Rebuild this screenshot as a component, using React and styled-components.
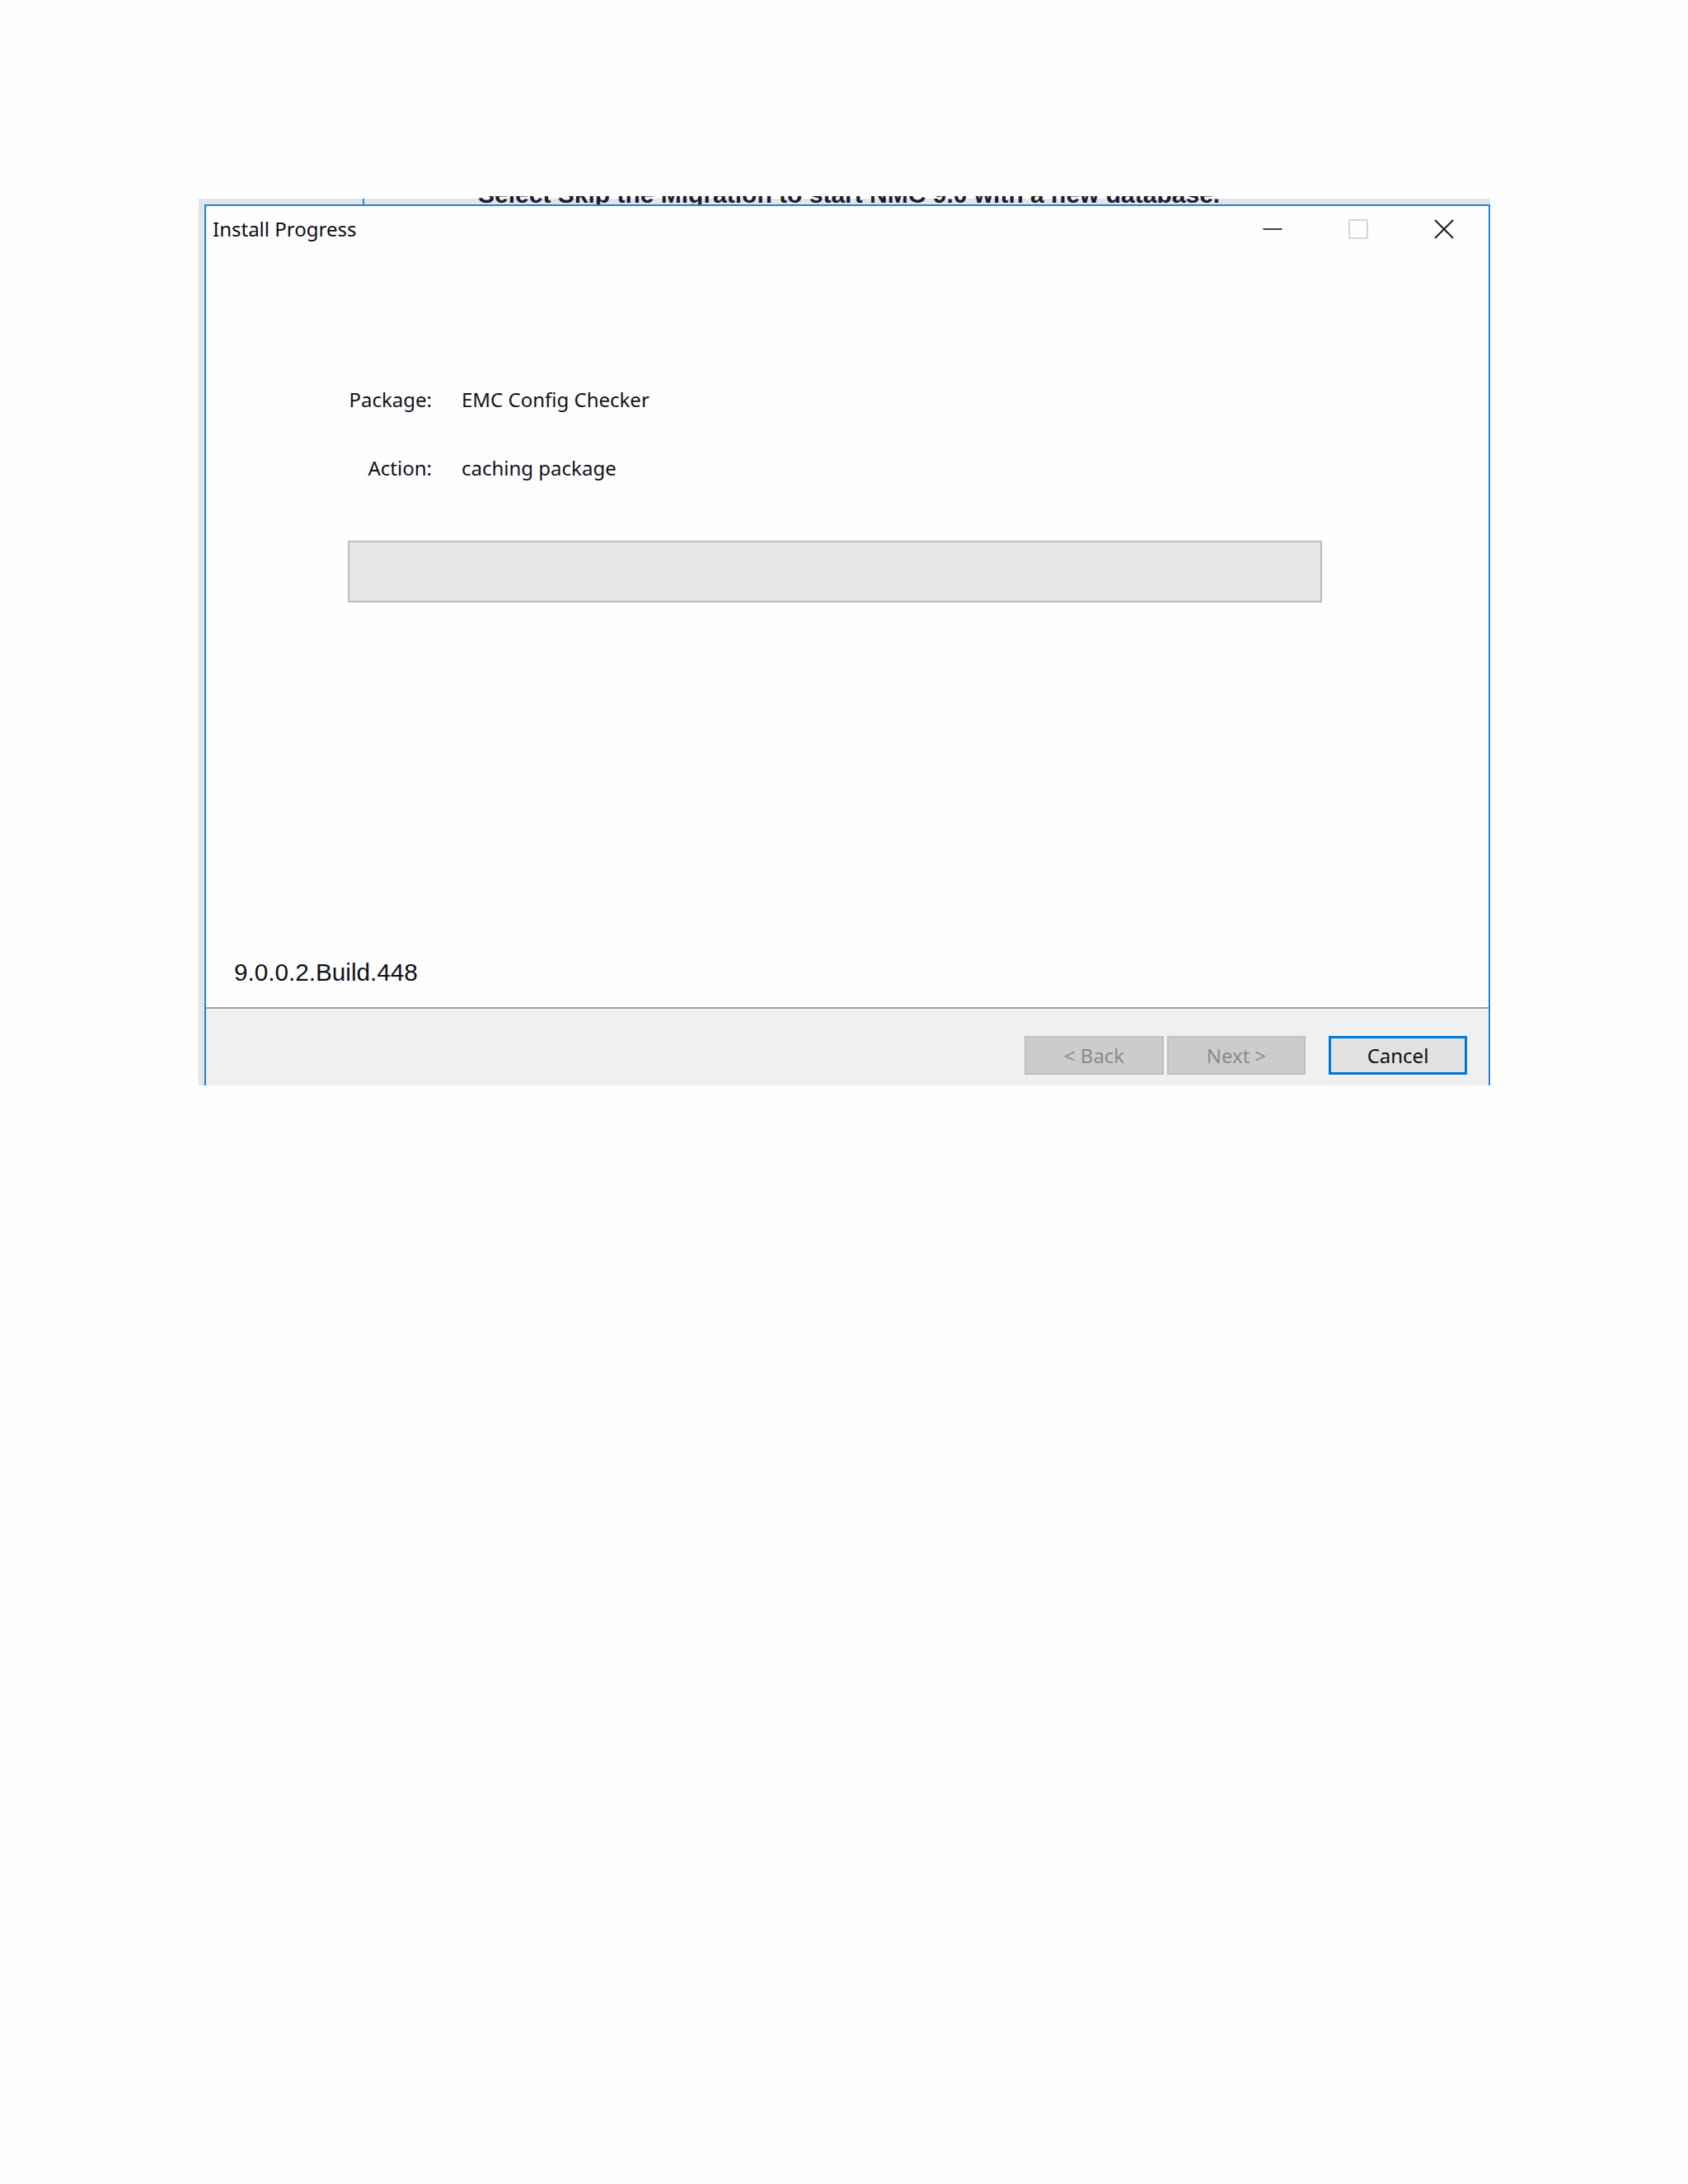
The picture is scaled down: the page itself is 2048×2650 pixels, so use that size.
import React from "react";
import styled, { createGlobalStyle } from "styled-components";

const GlobalStyle = createGlobalStyle`
  html, body {
    margin: 0;
    padding: 0;
    background: #fefefe;
  }
  body {
    font-family: "Noto Sans", "Open Sans", sans-serif;
  }
`;

const Page = styled.div`
  min-height: 2650px;
  box-sizing: border-box;
  padding: 238px 0 0 241px;
  background: #fefefe;
`;

const Stage = styled.div`
  width: 1567px;
  display: flex;
  flex-direction: column;
`;

const BehindStrip = styled.div`
  position: relative;
  height: 10px;
  overflow: hidden;
  background: linear-gradient(to bottom, transparent 3px, #e4e4e4 3px);
`;

const BehindTick = styled.span`
  position: absolute;
  left: 199px;
  top: 3px;
  bottom: 0;
  width: 2px;
  background: #2a86d8;
`;

const BehindText = styled.span`
  position: absolute;
  left: 339px;
  top: -17px;
  font: bold 30px/30px "Liberation Sans", Arial, sans-serif;
  color: #1c1c2a;
  white-space: nowrap;
`;

const WindowRow = styled.div`
  display: flex;
  align-items: stretch;
`;

const BehindEdge = styled.div`
  width: 7px;
  flex: none;
  background: #e4e4e4;
`;

const Window = styled.div`
  width: 1560px;
  box-sizing: border-box;
  border: 2px solid #1e84dc;
  border-bottom: none;
  background: #fefefe;
  display: flex;
  flex-direction: column;
`;

const TitleBar = styled.div`
  height: 56px;
  display: flex;
  align-items: center;
`;

const Title = styled.div`
  flex: 1;
  padding-left: 8px;
  font-size: 24px;
  line-height: 32px;
  color: #0c0c14;
`;

const Controls = styled.div`
  align-self: stretch;
  display: flex;
  padding-right: 2px;
`;

const ControlButton = styled.div`
  width: 104px;
  display: flex;
  align-items: center;
  justify-content: center;
`;

const Body = styled.div`
  display: flex;
  flex-direction: column;
`;

const InfoGrid = styled.div`
  display: grid;
  grid-template-columns: 101px auto;
  column-gap: 36px;
  row-gap: 51px;
  margin: 163px 0 0 173px;
  font-size: 24px;
  line-height: 32px;
  color: #10101a;
`;

const Label = styled.div`
  text-align: right;
  white-space: nowrap;
`;

const Value = styled.div`
  white-space: nowrap;
`;

const ProgressTrack = styled.div`
  margin: 72px 0 0 172px;
  width: 1182px;
  height: 75px;
  box-sizing: border-box;
  border: 2px solid #bcbcbc;
  background: #e6e5e8;
`;

const Version = styled.div`
  margin: 432px 0 25px 34px;
  font: 29.7px/34px "Liberation Sans", Arial, sans-serif;
  color: #10101a;
`;

const Footer = styled.div`
  border-top: 2px solid #a0a0a0;
  background: #f0f0f0;
  display: flex;
  justify-content: flex-end;
  padding: 33px 26px 13px 0;
`;

const Button = styled.div`
  width: ${(p) => p.$width || 168}px;
  height: 47px;
  margin-left: ${(p) => p.$gap || 0}px;
  box-sizing: border-box;
  display: flex;
  align-items: center;
  justify-content: center;
  font-size: 24px;
  line-height: 32px;
  border: ${(p) => (p.$primary ? "3px solid #0078d7" : "2px solid #bfbfbf")};
  background: ${(p) => (p.$primary ? "#e1e1e1" : "#cccccc")};
  color: ${(p) => (p.$primary ? "#0c0c14" : "#8a8a8e")};
`;

const MinimizeIcon = () => (
  <svg width="24" height="24" viewBox="0 0 24 24">
    <line x1="0.5" y1="12" x2="23.5" y2="12" stroke="#111" strokeWidth="1.6" />
  </svg>
);

const MaximizeIcon = () => (
  <svg width="24" height="24" viewBox="0 0 24 24">
    <rect x="1" y="1" width="22" height="22" fill="none" stroke="#c9c9c9" strokeWidth="1.5" />
  </svg>
);

const CloseIcon = () => (
  <svg width="24" height="24" viewBox="0 0 24 24">
    <line x1="1" y1="1" x2="23" y2="23" stroke="#111" strokeWidth="1.8" />
    <line x1="23" y1="1" x2="1" y2="23" stroke="#111" strokeWidth="1.8" />
  </svg>
);

export default function App() {
  return (
    <>
      <GlobalStyle />
      <Page>
        <Stage>
          <BehindStrip>
            <BehindTick />
            <BehindText>
              Select Skip the Migration to start NMC 9.0 with a new database.
            </BehindText>
          </BehindStrip>
          <WindowRow>
            <BehindEdge />
            <Window>
              <TitleBar>
                <Title>Install Progress</Title>
                <Controls>
                  <ControlButton>
                    <MinimizeIcon />
                  </ControlButton>
                  <ControlButton>
                    <MaximizeIcon />
                  </ControlButton>
                  <ControlButton>
                    <CloseIcon />
                  </ControlButton>
                </Controls>
              </TitleBar>
              <Body>
                <InfoGrid>
                  <Label>Package:</Label>
                  <Value>EMC Config Checker</Value>
                  <Label>Action:</Label>
                  <Value>caching package</Value>
                </InfoGrid>
                <ProgressTrack />
                <Version>9.0.0.2.Build.448</Version>
              </Body>
              <Footer>
                <Button $width={169}>&lt; Back</Button>
                <Button $gap={4}>Next &gt;</Button>
                <Button $gap={28} $primary>
                  Cancel
                </Button>
              </Footer>
            </Window>
          </WindowRow>
        </Stage>
      </Page>
    </>
  );
}
